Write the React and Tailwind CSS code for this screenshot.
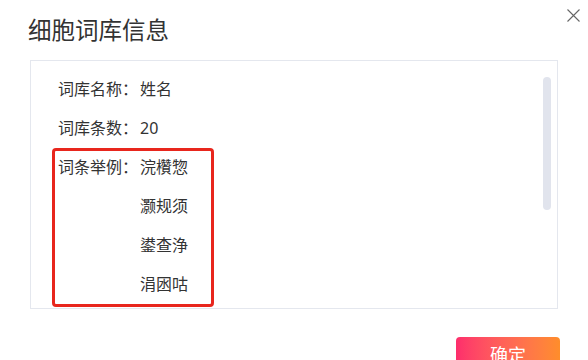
import React from "react";

const rows = [
  { label: "词库名称：", values: ["姓名"] },
  { label: "词库条数：", values: ["20"] },
  { label: "词条举例：", values: ["浣欑惣", "灏规须", "鍙查浄", "涓囦咕"] },
];

export default function App() {
  return (
    <div
      className="relative w-[588px] h-[360px] overflow-hidden bg-white text-[#333] flex flex-col"
      style={{ fontFamily: '"Noto Sans", "Noto Sans CJK SC", sans-serif' }}
    >
      <div className="flex items-start justify-between pl-[28px] pr-[8px]">
        <h1 className="pt-[13px] text-[23.5px] leading-[34px] font-normal text-[#333]">细胞词库信息</h1>
        <button className="mt-[8px] w-[14px] h-[14px] flex items-center justify-center">
          <svg width="13" height="13" viewBox="0 0 13 13" fill="none" stroke="#666" strokeWidth="1.1">
            <path d="M0.5 0.5 L12.5 12.5 M12.5 0.5 L0.5 12.5" />
          </svg>
        </button>
      </div>

      <div className="mt-[13px] ml-[30px] w-[528px] h-[249px] shrink-0 border border-[#e4e7ee] relative overflow-hidden">
        <div className="pt-[16px] pl-[27px] flex flex-col gap-[15px] text-[16px] leading-[24px]">
          {rows.map((r) => (
            <div key={r.label} className="flex">
              <div className="w-[82px] shrink-0">{r.label}</div>
              <div className="flex flex-col gap-[15px]">
                {r.values.map((v) => (
                  <div key={v}>{v}</div>
                ))}
              </div>
            </div>
          ))}
        </div>
        <div className="absolute right-[6px] top-[16px] w-[8px] h-[133px] rounded-full bg-[#e1e4ed]" />
      </div>

      <div className="flex justify-end w-[560px] mt-[28px] shrink-0">
        <button className="w-[104px] h-[36px] rounded-[4px] bg-gradient-to-r from-[#fd2d6c] to-[#ff8d2a] text-white text-[18px] leading-[36px]">
          确定
        </button>
      </div>

      <div className="absolute left-[52px] top-[148px] w-[162px] h-[159px] border-[3px] border-[#e8261d] rounded-[4px] pointer-events-none" />
    </div>
  );
}
